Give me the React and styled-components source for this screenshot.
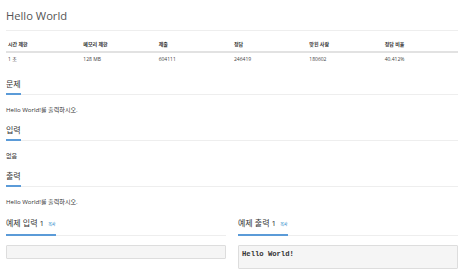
import React from 'react';
import styled, { createGlobalStyle } from 'styled-components';

const GlobalStyle = createGlobalStyle`
  html, body {
    margin: 0;
    padding: 0;
    background: #fff;
  }
  body {
    font-family: "Open Sans", "Noto Sans CJK KR", sans-serif;
    color: #333;
  }
`;

const Page = styled.div`
  width: 452px;
  padding: 0 0 0 6px;
`;

const PageHeader = styled.div`
  margin-top: 8px;
  padding-bottom: 6px;
  border-bottom: 1px solid #eee;
`;

const PageTitle = styled.h1`
  margin: 0;
  font-size: 11.2px;
  line-height: 16px;
  font-weight: 400;
  color: #555;
`;

const Table = styled.table`
  width: 100%;
  margin-top: 7px;
  border-collapse: collapse;
  table-layout: fixed;
  font-size: 5px;
  line-height: 7px;
  color: #444;

  th, td {
    text-align: left;
    padding: 3px 2px;
  }
  th {
    font-weight: 700;
    color: #333;
    border-bottom: 2px solid #e2e2e2;
  }
`;

const Section = styled.section`
  margin-top: ${(p) => p.$gap || 12}px;
`;

const Headline = styled.div`
  display: flex;
  border-bottom: 1px solid #eee;
`;

const HeadlineTitle = styled.h2`
  display: flex;
  align-items: baseline;
  margin: 0 0 -1px;
  padding-bottom: 3px;
  border-bottom: 2px solid #5b9bd8;
  font-size: 8px;
  line-height: 12px;
  font-weight: 400;
  color: #333;
`;

const CopyLink = styled.a`
  margin-left: 4px;
  font-size: 4px;
  line-height: 12px;
  color: #0076c0;
  text-decoration: none;
`;

const Text = styled.p`
  margin: 10px 0 0;
  font-size: 6.1px;
  line-height: 9px;
`;

const SampleGrid = styled.div`
  display: grid;
  grid-template-columns: 1fr 1fr;
  column-gap: 12px;
`;

const SampleBox = styled.pre`
  margin: 9px 0 0;
  height: ${(p) => p.$h || 14}px;
  padding: 0 3px;
  background: #f5f5f5;
  border: 1px solid #ddd;
  border-radius: 1px;
  font-family: "Liberation Mono", "DejaVu Sans Mono", monospace;
  font-weight: 700;
  font-size: 7.2px;
  line-height: 17px;
  color: #333;
  box-sizing: border-box;
`;

const stats = [
  ['시간 제한', '1 초'],
  ['메모리 제한', '128 MB'],
  ['제출', '604111'],
  ['정답', '246419'],
  ['맞힌 사람', '180602'],
  ['정답 비율', '40.412%'],
];

const Block = ({ title, text, gap }) => (
  <Section $gap={gap}>
    <Headline>
      <HeadlineTitle>{title}</HeadlineTitle>
    </Headline>
    <Text>{text}</Text>
  </Section>
);

export default function App() {
  return (
    <Page>
      <GlobalStyle />
      <PageHeader>
        <PageTitle>Hello World</PageTitle>
      </PageHeader>

      <Table>
        <thead>
          <tr>
            {stats.map(([h]) => (
              <th key={h}>{h}</th>
            ))}
          </tr>
        </thead>
        <tbody>
          <tr>
            {stats.map(([h, v]) => (
              <td key={h}>{v}</td>
            ))}
          </tr>
        </tbody>
      </Table>

      <Block title="문제" text="Hello World!를 출력하시오." gap={12} />
      <Block title="입력" text="없음" gap={10} />
      <Block title="출력" text="Hello World!를 출력하시오." gap={10} />

      <SampleGrid>
        <Section $gap={11}>
          <Headline>
            <HeadlineTitle>
              예제 입력 1<CopyLink>복사</CopyLink>
            </HeadlineTitle>
          </Headline>
          <SampleBox $h={14}></SampleBox>
        </Section>
        <Section $gap={11}>
          <Headline>
            <HeadlineTitle>
              예제 출력 1<CopyLink>복사</CopyLink>
            </HeadlineTitle>
          </Headline>
          <SampleBox $h={24}>Hello World!</SampleBox>
        </Section>
      </SampleGrid>
    </Page>
  );
}
